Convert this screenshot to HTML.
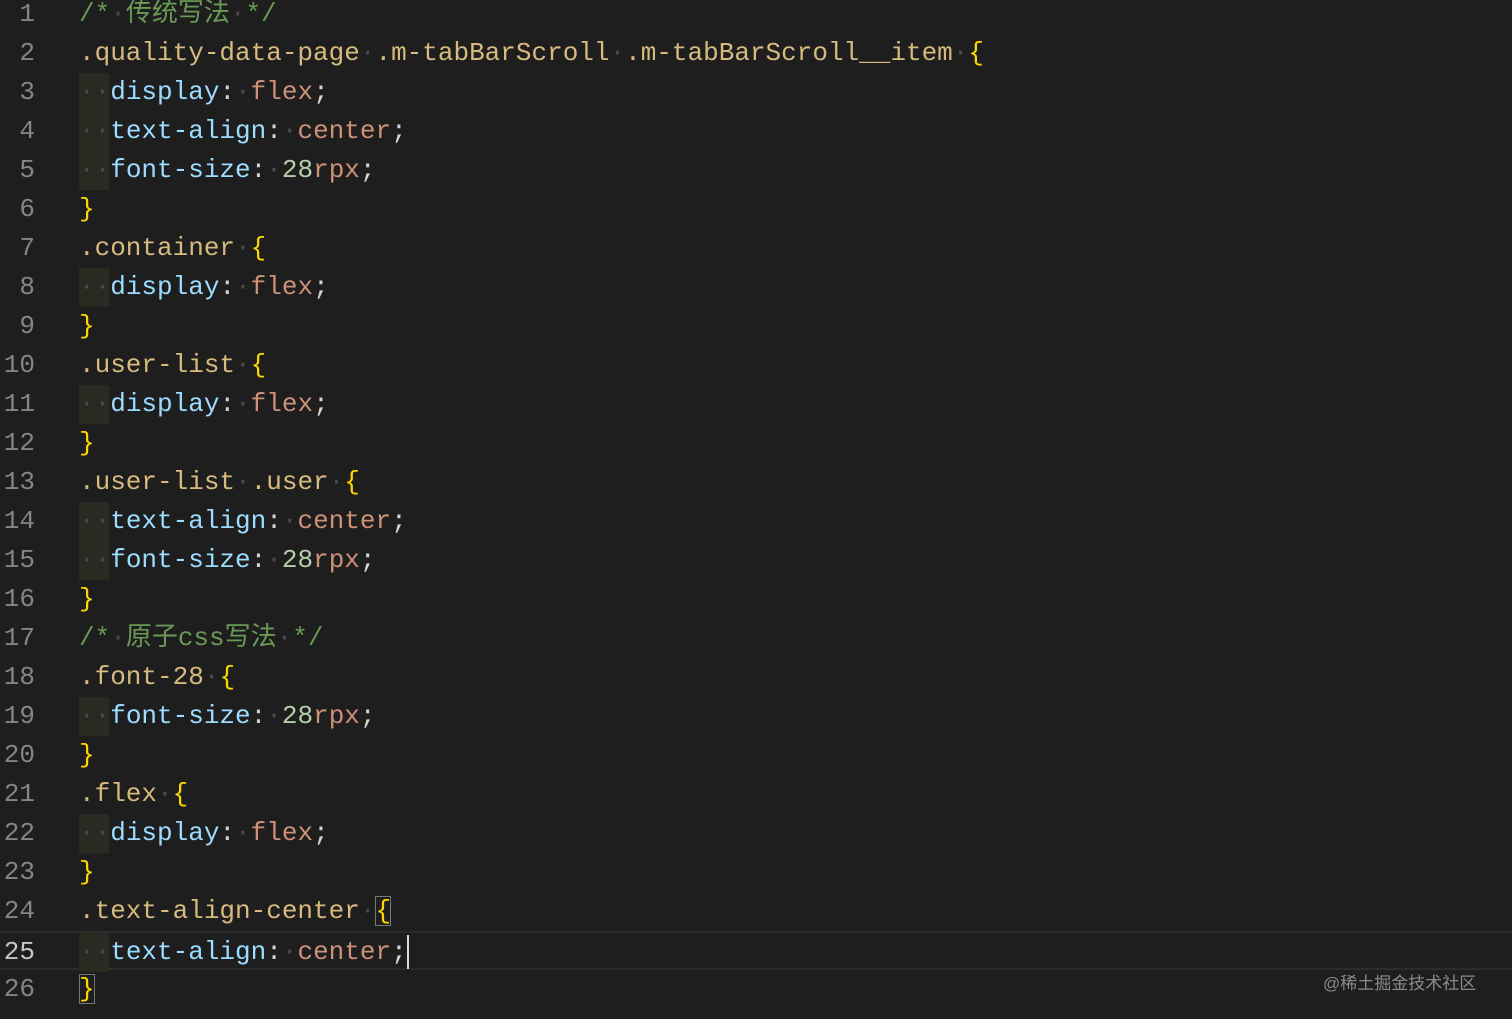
<!DOCTYPE html><html><head><meta charset="utf-8"><style>
body{margin:0;width:1512px;height:1019px;background:#1e1e1e;overflow:hidden;position:relative;font-family:"Liberation Mono","Noto Sans CJK SC",monospace;font-size:26px}
.l{position:absolute;left:0;height:39px;line-height:39px;width:1512px;white-space:pre}
.n{position:absolute;right:1477px;color:#858585;text-align:right}
.c{position:absolute;left:79px}
.s{color:#d7ba7d}.p{color:#9cdcfe}.v{color:#ce9178}.num{color:#b5cea8}.b{color:#ffd700}.cm{color:#6a9955}.w{color:#d4d4d4}.d{color:#4a4a4a}
.g{position:absolute;left:79px;width:30px;background:#2a2a22;height:39px}
</style></head><body>
<div id="r"></div>
<script>
const L=[
'<span class="cm">/*<span class="d">·</span>传统写法<span class="d">·</span>*/</span>',
'<span class="s">.quality-data-page<span class="d">·</span>.m-tabBarScroll<span class="d">·</span>.m-tabBarScroll__item</span><span class="d">·</span><span class="b">{</span>',
'I<span class="p">display</span><span class="w">:</span><span class="d">·</span><span class="v">flex</span><span class="w">;</span>',
'I<span class="p">text-align</span><span class="w">:</span><span class="d">·</span><span class="v">center</span><span class="w">;</span>',
'I<span class="p">font-size</span><span class="w">:</span><span class="d">·</span><span class="num">28</span><span class="v">rpx</span><span class="w">;</span>',
'<span class="b">}</span>',
'<span class="s">.container</span><span class="d">·</span><span class="b">{</span>',
'I<span class="p">display</span><span class="w">:</span><span class="d">·</span><span class="v">flex</span><span class="w">;</span>',
'<span class="b">}</span>',
'<span class="s">.user-list</span><span class="d">·</span><span class="b">{</span>',
'I<span class="p">display</span><span class="w">:</span><span class="d">·</span><span class="v">flex</span><span class="w">;</span>',
'<span class="b">}</span>',
'<span class="s">.user-list<span class="d">·</span>.user</span><span class="d">·</span><span class="b">{</span>',
'I<span class="p">text-align</span><span class="w">:</span><span class="d">·</span><span class="v">center</span><span class="w">;</span>',
'I<span class="p">font-size</span><span class="w">:</span><span class="d">·</span><span class="num">28</span><span class="v">rpx</span><span class="w">;</span>',
'<span class="b">}</span>',
'<span class="cm">/*<span class="d">·</span>原子css写法<span class="d">·</span>*/</span>',
'<span class="s">.font-28</span><span class="d">·</span><span class="b">{</span>',
'I<span class="p">font-size</span><span class="w">:</span><span class="d">·</span><span class="num">28</span><span class="v">rpx</span><span class="w">;</span>',
'<span class="b">}</span>',
'<span class="s">.flex</span><span class="d">·</span><span class="b">{</span>',
'I<span class="p">display</span><span class="w">:</span><span class="d">·</span><span class="v">flex</span><span class="w">;</span>',
'<span class="b">}</span>',
'<span class="s">.text-align-center</span><span class="d">·</span><span class="b" style="outline:1.5px solid #777;outline-offset:-1px">{</span>',
'I<span class="p">text-align</span><span class="w">:</span><span class="d">·</span><span class="v">center</span><span class="w">;</span><span style="display:inline-block;width:2px;height:34px;background:#ddd;vertical-align:middle"></span>',
'<span class="b" style="outline:1.5px solid #777;outline-offset:-1px">}</span>'];
let h='';
L.forEach((t,i)=>{const top=-5+39*i;const ind=t[0]=='I';
 if(ind)t='<span class="d">··</span>'+t.slice(1);
 const cur=i==24?'border-top:2px solid #2c2c2c;border-bottom:2px solid #2c2c2c;box-sizing:border-box;':'';
 h+=`<div class="l" style="top:${top}px;${cur}">${ind?'<div class="g"></div>':''}<span class="n" style="${i==24?'color:#c6c6c6':''}">${i+1}</span><span class="c">${t}</span></div>`;});
document.getElementById('r').innerHTML=h;
</script>
<div style="position:absolute;left:1323px;top:969px;font-family:'Liberation Sans','Noto Sans CJK SC',sans-serif;font-size:17px;color:#8a8a8a">@稀土掘金技术社区</div>
</body></html>
